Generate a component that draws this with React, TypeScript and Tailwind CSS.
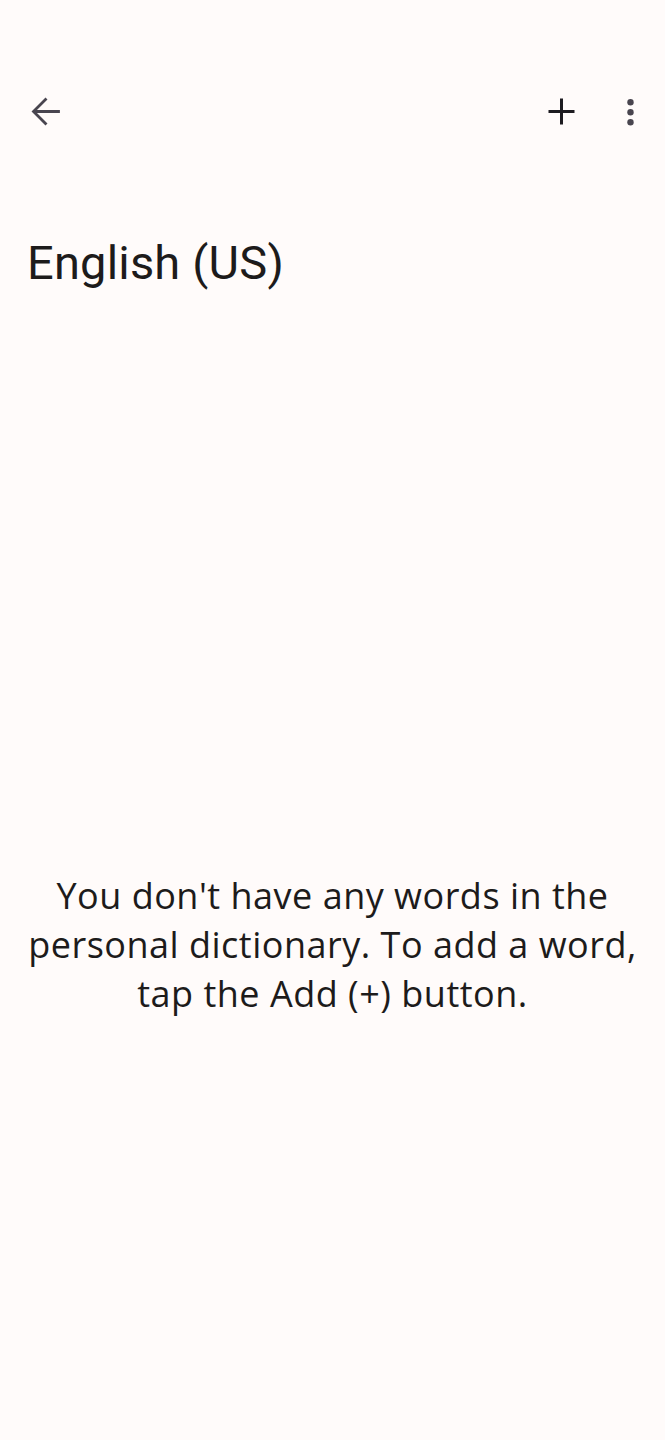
import React from "react";

export default function App() {
  return (
    <div
      className="min-h-[1440px] w-full bg-[#fffbfa] flex flex-col text-[#1d1b1b]"
      style={{ fontFamily: "Roboto, 'Noto Sans', sans-serif" }}
    >
      <div className="mt-[92px] h-[39px] flex items-center justify-between pl-[26px] pr-[15px]">
        <svg width="39" height="39" viewBox="0 0 39 39" fill="none">
          <path d="M32.5 19.5H8.5M19.5 7.5L7.5 19.5L19.5 31.5" stroke="#49454f" strokeWidth="2.8" strokeLinecap="square" />
        </svg>
        <div className="flex items-center gap-[30px]">
          <svg width="39" height="39" viewBox="0 0 39 39" fill="none">
            <path d="M19.5 6.5V32.5M6.5 19.5H32.5" stroke="#1d1b20" strokeWidth="3" />
          </svg>
          <svg width="39" height="39" viewBox="0 0 39 39" fill="#49454f">
            <circle cx="19.5" cy="10.3" r="3.2" />
            <circle cx="19.5" cy="20.3" r="3.2" />
            <circle cx="19.5" cy="30.3" r="3.2" />
          </svg>
        </div>
      </div>
      <h1 className="mt-[104px] pl-[27px] text-[47px] leading-[56px] font-normal tracking-[0.2px]">English (US)</h1>
      <p
        className="mt-[580px] text-center text-[36px] leading-[49px] tracking-[0.5px]"
        style={{ fontFamily: "'Open Sans', Roboto, sans-serif" }}
      >
        You don't have any words in the
        <br />
        personal dictionary. To add a word,
        <br />
        tap the Add (+) button.
      </p>
    </div>
  );
}
